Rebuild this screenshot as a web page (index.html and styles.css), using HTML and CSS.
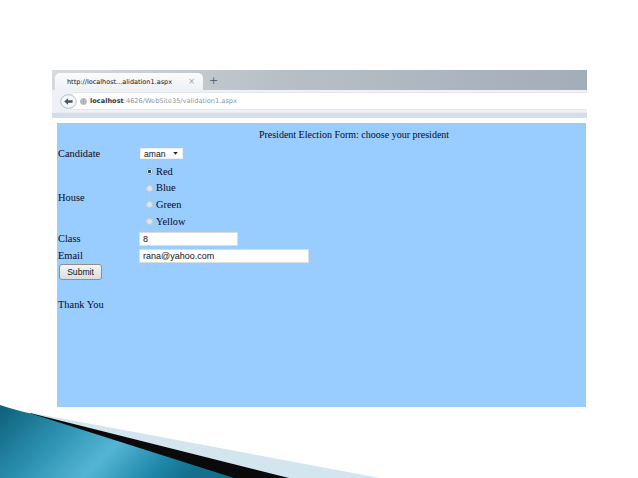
FILE: index.html
```html
<!DOCTYPE html>
<html>
<head>
<meta charset="utf-8">
<link rel="stylesheet" href="styles.css">
</head>
<body>
<div class="slide">
  <div class="window">
    <div class="tabstrip">
      <div class="tab">
        <span class="tab-title">http://localhost...alidation1.aspx</span>
        <span class="tab-close">×</span>
      </div>
      <span class="newtab">+</span>
    </div>
    <div class="navbar">
      <span class="back">
        <svg width="17" height="15" viewBox="0 0 17 15"><ellipse cx="8.5" cy="7.5" rx="7.8" ry="6.8" fill="#f4f6f8" stroke="#a9b1ba" stroke-width="0.8"/><path d="M4.2 7.5 L8 4.2 L8 6.3 L12.6 6.3 L12.6 8.7 L8 8.7 L8 10.8 Z" fill="#4d5560"/></svg>
      </span>
      <div class="urlbar">
        <svg class="globe" width="7" height="7" viewBox="0 0 8 8"><circle cx="4" cy="4" r="3.5" fill="#c9ced4" stroke="#9aa2ab" stroke-width="0.7"/><path d="M0.6 4 H7.4 M4 0.5 V7.5 M1.3 2.2 H6.7 M1.3 5.8 H6.7" stroke="#8e969f" stroke-width="0.5"/></svg>
        <span class="host">localhost</span><span class="path">:4626/WebSite35/validation1.aspx</span>
      </div>
    </div>
    <div class="navline"></div>
    <div class="page">
      <div class="title">President Election Form: choose your president</div>
      <div class="form">
        <div class="label">Candidate</div>
        <div class="field">
          <div class="select"><span>aman</span><svg width="5" height="3" viewBox="0 0 6 4"><path d="M0 0 H6 L3 3.5 Z" fill="#222"/></svg></div>
        </div>
        <div class="label house">House</div>
        <div class="field radios">
          <label class="radio"><input type="radio" name="house" checked><span>Red</span></label>
          <label class="radio"><input type="radio" name="house"><span>Blue</span></label>
          <label class="radio"><input type="radio" name="house"><span>Green</span></label>
          <label class="radio"><input type="radio" name="house"><span>Yellow</span></label>
        </div>
        <div class="label">Class</div>
        <div class="field"><input class="text short" type="text" value="8"></div>
        <div class="label">Email</div>
        <div class="field"><input class="text long" type="text" value="rana@yahoo.com"></div>
      </div>
      <button class="submit" type="button">Submit</button>
      <div class="thanks">Thank You</div>
    </div>
  </div>
  <svg class="swoosh" width="390" height="73" viewBox="0 0 390 73">
    <defs>
      <linearGradient id="teal" x1="0" y1="0" x2="1" y2="0.3">
        <stop offset="0" stop-color="#0d5f78"/>
        <stop offset="0.35" stop-color="#2e93b4"/>
        <stop offset="0.6" stop-color="#55b6d3"/>
        <stop offset="0.85" stop-color="#1f88aa"/>
        <stop offset="1" stop-color="#146f8f"/>
      </linearGradient>
    </defs>
    <path d="M30 7.5 L380 73 L0 73 Z" fill="#d3e6ef"/>
    <path d="M31 8.3 L289 73 L0 73 Z" fill="#0a0a0a"/>
    <path d="M0 0 C12 4 22 6.5 31 8.5 L234 73 L0 73 Z" fill="url(#teal)"/>
  </svg>
</div>
</body>
</html>
```

FILE: styles.css
```css
html, body {
  margin: 0;
  padding: 0;
  background: #ffffff;
}

.slide {
  position: relative;
  width: 638px;
  height: 478px;
  overflow: hidden;
  background: #ffffff;
  padding-top: 70px;
  box-sizing: border-box;
}

.window {
  margin-left: 52px;
  width: 535px;
}

.tabstrip {
  height: 20px;
  background: linear-gradient(to right, #d7dadd 0%, #b9c0c7 40%, #a3adb8 100%);
  display: flex;
  align-items: flex-end;
  padding-left: 3px;
}

.tab {
  width: 148px;
  height: 17px;
  box-sizing: border-box;
  background: linear-gradient(#fafbfc, #eef1f4);
  border-radius: 5px 5px 0 0;
  display: flex;
  align-items: center;
  padding-left: 12px;
  font-family: "DejaVu Sans", sans-serif;
  font-size: 6.5px;
  color: #111;
}

.tab-title {
  flex: 1;
  white-space: nowrap;
}

.tab-close {
  color: #9aa0a6;
  font-size: 8px;
  margin-right: 8px;
}

.newtab {
  font-family: "DejaVu Sans", sans-serif;
  font-size: 11px;
  color: #5d6670;
  margin-left: 6px;
  height: 19px;
  line-height: 19px;
}

.navbar {
  height: 22px;
  background: #eef1f5;
  display: flex;
  align-items: center;
  padding-left: 8px;
}

.back {
  display: flex;
  width: 17px;
  height: 15px;
  position: relative;
  z-index: 1;
}

.urlbar {
  flex: 1;
  height: 18px;
  margin-left: -4px;
  background: #ffffff;
  border-top: 1px solid #e3e7ec;
  border-bottom: 1px solid #e3e7ec;
  box-sizing: border-box;
  display: flex;
  align-items: center;
  padding-left: 7px;
  font-family: "DejaVu Sans", sans-serif;
  font-size: 6.6px;
  white-space: nowrap;
}

.globe {
  margin-right: 3px;
}

.host {
  color: #333a42;
  font-weight: bold;
}

.path {
  color: #8d949c;
}

.navline {
  height: 5px;
  background: #d4dee9;
  border-top: 1px solid #e8eef4;
  margin-bottom: 5px;
}

.page {
  margin-left: 5px;
  width: 529px;
  height: 284px;
  background: #99ccff;
  font-family: "Liberation Serif", "Times New Roman", serif;
  font-size: 10.4px;
  color: #0a0a1a;
  padding-left: 1px;
  box-sizing: border-box;
}

.title {
  height: 22px;
  font-size: 10px;
  line-height: 12px;
  padding-top: 5.7px;
  box-sizing: border-box;
  text-align: center;
  padding-left: 64px;
}

.form {
  display: grid;
  grid-template-columns: 81px 1fr;
  grid-template-rows: 17px 68px 17px 17px;
  align-items: center;
}

.label {
  line-height: 12px;
}

.house {
  padding-top: 3.4px;
}

.field {
  display: flex;
  align-items: center;
}

.select {
  margin-left: 1px;
  width: 43px;
  height: 11px;
  box-sizing: border-box;
  background: #ffffff;
  border: 1px solid #eeeeee;
  display: flex;
  align-items: center;
  justify-content: space-between;
  padding: 0 4px 0 3px;
  font-family: "Liberation Sans", Arial, sans-serif;
  font-size: 8.6px;
  color: #111;
}

.radios {
  flex-direction: column;
  align-items: flex-start;
  padding-top: 1.2px;
}

.radio {
  display: flex;
  align-items: center;
  height: 16.67px;
  line-height: 12px;
  padding-left: 7px;
}

.radio input {
  appearance: none;
  -webkit-appearance: none;
  margin: 0 3px 0 0;
  width: 7px;
  height: 7px;
  border-radius: 50%;
  border: 1px solid #c5cbd1;
  background: #e1e5e8;
  box-sizing: border-box;
}

.radio input:checked {
  background: radial-gradient(circle, #1b5266 0 1.5px, #f2f5f6 1.9px);
  border-color: #a3abb2;
}

.text {
  height: 14px;
  box-sizing: border-box;
  border: 1px solid #dcdcdc;
  background: #ffffff;
  padding: 0 3px;
  font-family: "Liberation Sans", Arial, sans-serif;
  font-size: 9px;
  color: #111;
  outline: none;
}

.short {
  width: 99px;
}

.long {
  width: 170px;
}

.submit {
  display: block;
  margin: 0 0 0 1px;
  width: 43px;
  height: 16px;
  padding: 0;
  border: 1px solid #8f8f8f;
  border-radius: 3px;
  background: linear-gradient(#f6f6f6, #dcdcdc);
  font-family: "Liberation Sans", Arial, sans-serif;
  font-size: 8.6px;
  color: #111;
}

.thanks {
  margin-top: 18.8px;
  line-height: 12px;
}

.swoosh {
  position: absolute;
  left: 0;
  bottom: 0;
}
```
